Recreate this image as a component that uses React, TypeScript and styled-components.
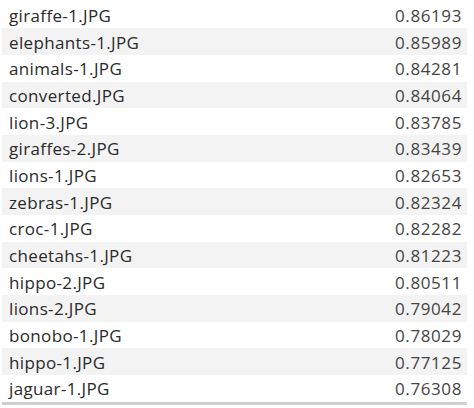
import React from "react";
import styled, { createGlobalStyle } from "styled-components";

const Global = createGlobalStyle`
  html, body { margin: 0; padding: 0; background: #ffffff; }
  body { font-family: "Open Sans", "Noto Sans", sans-serif; }
`;

const Wrap = styled.div`
  width: 465px;
  padding: 1.5px 0 0 2px;
`;

const Table = styled.div`
  display: flex;
  flex-direction: column;
  border-bottom: 3px solid #d0d0d0;
`;

const Row = styled.div<{ $striped: boolean }>`
  display: flex;
  align-items: center;
  justify-content: space-between;
  height: 26.7px;
  padding: 1px 5px 0 7px;
  box-sizing: border-box;
  background: ${(p) => (p.$striped ? "#f3f3f3" : "#ffffff")};
  font-size: 17px;
  letter-spacing: 0.35px;
  line-height: 1;
`;

const Name = styled.span`
  color: #2a2a2a;
`;

const Score = styled.span`
  color: #444444;
  letter-spacing: 0.6px;
`;

const data: [string, string][] = [
  ["giraffe-1.JPG", "0.86193"],
  ["elephants-1.JPG", "0.85989"],
  ["animals-1.JPG", "0.84281"],
  ["converted.JPG", "0.84064"],
  ["lion-3.JPG", "0.83785"],
  ["giraffes-2.JPG", "0.83439"],
  ["lions-1.JPG", "0.82653"],
  ["zebras-1.JPG", "0.82324"],
  ["croc-1.JPG", "0.82282"],
  ["cheetahs-1.JPG", "0.81223"],
  ["hippo-2.JPG", "0.80511"],
  ["lions-2.JPG", "0.79042"],
  ["bonobo-1.JPG", "0.78029"],
  ["hippo-1.JPG", "0.77125"],
  ["jaguar-1.JPG", "0.76308"],
];

export default function App() {
  return (
    <>
      <Global />
      <Wrap>
        <Table>
          {data.map(([n, s], i) => (
            <Row key={n} $striped={i % 2 === 1}>
              <Name>{n}</Name>
              <Score>{s}</Score>
            </Row>
          ))}
        </Table>
      </Wrap>
    </>
  );
}
